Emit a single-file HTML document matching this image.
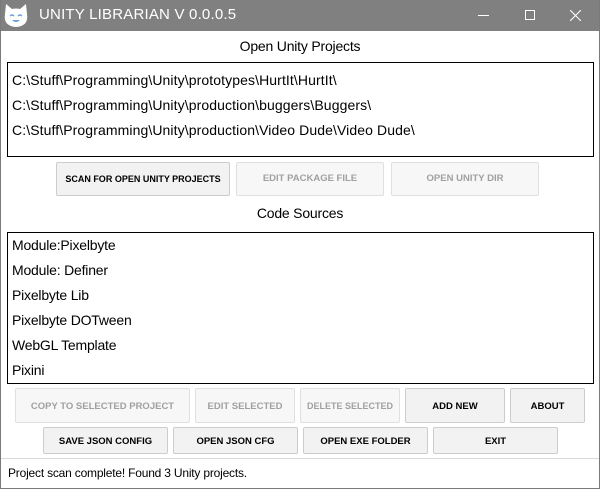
<!DOCTYPE html>
<html><head><style>
*{margin:0;padding:0;box-sizing:border-box}
body{width:600px;height:489px;background:#fff;font-family:"Liberation Sans",sans-serif;position:relative;overflow:hidden}
.win{position:absolute;left:0;top:0;width:600px;height:489px;border:1px solid #7a7a7a;border-top:none}
.tb{position:absolute;left:0;top:0;width:600px;height:31px;background:#808080;color:#fff}
.tb .t{position:absolute;left:39px;top:6px;font-size:15px;letter-spacing:.2px}
.a{position:absolute;font-size:14px;color:#000;white-space:nowrap;letter-spacing:-0.2px}
.p{letter-spacing:0.1px}
.box{position:absolute;left:7px;width:587px;border:1px solid #000}
.b{position:absolute;border:1px solid #ccc;background:#f2f2f2;border-radius:2px;font-size:9.5px;font-weight:bold;text-align:center;color:#000;white-space:nowrap;overflow:hidden}
.b.d{color:#a0a0a0;background:#f7f7f7;border-color:#e0e0e0}
</style></head><body>
<div class="tb">
<svg style="position:absolute;left:2px;top:2px" width="28" height="28" viewBox="0 0 28 28"><path d="M3 12 L4 2 L10 7 Q14 6 18 7 L24 2 L25 12 Q27 24 14 25 Q1 24 3 12Z" fill="#fff"/><path d="M8 14 q2 -2 4 0 M16 14 q2 -2 4 0" stroke="#6aa0e0" stroke-width="1.3" fill="none"/><path d="M10 18 q4 4 8 0Z" fill="#6aa0e0"/></svg>
<div class="t">UNITY LIBRARIAN V 0.0.0.5</div>
<div style="position:absolute;left:478px;top:15px;width:11px;height:1px;background:#fff"></div>
<div style="position:absolute;left:525px;top:10px;width:10px;height:10px;border:1px solid #fff"></div>
<svg style="position:absolute;left:570px;top:10px" width="11" height="11"><path d="M0 0L11 11M11 0L0 11" stroke="#fff" stroke-width="1.1"/></svg>
</div>
<div class="a" style="left:0;width:600px;text-align:center;top:38px">Open Unity Projects</div>
<div class="box" style="top:62px;height:95px"></div>
<div class="a p" style="left:12px;top:72px">C:\Stuff\Programming\Unity\prototypes\HurtIt\HurtIt\</div>
<div class="a p" style="left:12px;top:97px">C:\Stuff\Programming\Unity\production\buggers\Buggers\</div>
<div class="a p" style="left:12px;top:122px">C:\Stuff\Programming\Unity\production\Video Dude\Video Dude\</div>
<div class="b" style="left:56px;top:162px;width:174px;height:34px;line-height:32px;font-size:9px">SCAN FOR OPEN UNITY PROJECTS</div>
<div class="b d" style="left:236px;top:162px;width:148px;height:34px;line-height:32px">EDIT PACKAGE FILE</div>
<div class="b d" style="left:391px;top:162px;width:148px;height:34px;line-height:32px">OPEN UNITY DIR</div>
<div class="a" style="left:0;width:600px;text-align:center;top:205px">Code Sources</div>
<div class="box" style="top:232px;height:152px"></div>
<div class="a" style="left:12px;top:237px">Module:Pixelbyte</div>
<div class="a" style="left:12px;top:262px">Module: Definer</div>
<div class="a" style="left:12px;top:287px">Pixelbyte Lib</div>
<div class="a" style="left:12px;top:312px">Pixelbyte DOTween</div>
<div class="a" style="left:12px;top:337px">WebGL Template</div>
<div class="a" style="left:12px;top:362px">Pixini</div>
<div class="b d" style="left:15px;top:388px;width:175px;height:35px;line-height:35px">COPY TO SELECTED PROJECT</div>
<div class="b d" style="left:195px;top:388px;width:100px;height:35px;line-height:35px">EDIT SELECTED</div>
<div class="b d" style="left:300px;top:388px;width:100px;height:35px;line-height:35px;font-size:9px">DELETE SELECTED</div>
<div class="b" style="left:405px;top:388px;width:100px;height:35px;line-height:35px">ADD NEW</div>
<div class="b" style="left:510px;top:388px;width:75px;height:35px;line-height:35px">ABOUT</div>
<div class="b" style="left:43px;top:427px;width:125px;height:27px;line-height:27px">SAVE JSON CONFIG</div>
<div class="b" style="left:173px;top:427px;width:125px;height:27px;line-height:27px">OPEN JSON CFG</div>
<div class="b" style="left:303px;top:427px;width:125px;height:27px;line-height:27px">OPEN EXE FOLDER</div>
<div class="b" style="left:433px;top:427px;width:125px;height:27px;line-height:27px">EXIT</div>
<div style="position:absolute;left:0;top:458px;width:600px;height:1px;background:#d8d8d8"></div>
<div class="a" style="left:8px;top:466px;font-size:12px">Project scan complete! Found 3 Unity projects.</div>
<div class="win"></div>
</body></html>
